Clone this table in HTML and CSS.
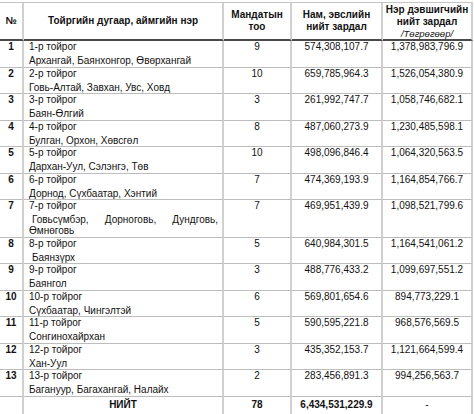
FILE: index.html
```html
<!DOCTYPE html>
<html lang="mn">
<head>
<meta charset="utf-8">
<link rel="stylesheet" href="styles.css">
</head>
<body>
<table class="report">
  <colgroup>
    <col class="c-no">
    <col class="c-name">
    <col class="c-seat">
    <col class="c-party">
    <col class="c-cand">
  </colgroup>
  <thead>
    <tr>
      <th>№</th>
      <th>Тойргийн дугаар, аймгийн нэр</th>
      <th>Мандатын<br>тоо</th>
      <th>Нам, эвслийн<br>нийт зардал</th>
      <th class="cand">Нэр дэвшигчийн<br>нийт зардал<br><span class="unit">/Төгрөгөөр/</span></th>
    </tr>
  </thead>
  <tbody>
    <tr><td class="no">1</td><td class="name"><div class="dist">1-р тойрог</div><div class="aimag">Архангай, Баянхонгор, Өвөрхангай</div></td><td>9</td><td>574,308,107.7</td><td>1,378,983,796.9</td></tr>
    <tr><td class="no">2</td><td class="name"><div class="dist">2-р тойрог</div><div class="aimag">Говь-Алтай, Завхан, Увс, Ховд</div></td><td>10</td><td>659,785,964.3</td><td>1,526,054,380.9</td></tr>
    <tr><td class="no">3</td><td class="name"><div class="dist">3-р тойрог</div><div class="aimag">Баян-Өлгий</div></td><td>3</td><td>261,992,747.7</td><td>1,058,746,682.1</td></tr>
    <tr><td class="no">4</td><td class="name"><div class="dist">4-р тойрог</div><div class="aimag">Булган, Орхон, Хөвсгөл</div></td><td>8</td><td>487,060,273.9</td><td>1,230,485,598.1</td></tr>
    <tr><td class="no">5</td><td class="name"><div class="dist">5-р тойрог</div><div class="aimag">Дархан-Уул, Сэлэнгэ, Төв</div></td><td>10</td><td>498,096,846.4</td><td>1,064,320,563.5</td></tr>
    <tr><td class="no">6</td><td class="name"><div class="dist">6-р тойрог</div><div class="aimag">Дорнод, Сүхбаатар, Хэнтий</div></td><td>7</td><td>474,369,193.9</td><td>1,164,854,766.7</td></tr>
    <tr><td class="no">7</td><td class="name"><div class="dist">7-р тойрог</div><div class="aimag indent justify">Говьсүмбэр, Дорноговь, Дундговь,</div><div class="aimag">Өмнөговь</div></td><td>7</td><td>469,951,439.9</td><td>1,098,521,799.6</td></tr>
    <tr><td class="no">8</td><td class="name"><div class="dist">8-р тойрог</div><div class="aimag indent">Баянзүрх</div></td><td>5</td><td>640,984,301.5</td><td>1,164,541,061.2</td></tr>
    <tr><td class="no">9</td><td class="name"><div class="dist">9-р тойрог</div><div class="aimag">Баянгол</div></td><td>3</td><td>488,776,433.2</td><td>1,099,697,551.2</td></tr>
    <tr><td class="no">10</td><td class="name"><div class="dist">10-р тойрог</div><div class="aimag">Сүхбаатар, Чингэлтэй</div></td><td>6</td><td>569,801,654.6</td><td>894,773,229.1</td></tr>
    <tr><td class="no">11</td><td class="name"><div class="dist">11-р тойрог</div><div class="aimag">Сонгинохайрхан</div></td><td>5</td><td>590,595,221.8</td><td>968,576,569.5</td></tr>
    <tr><td class="no">12</td><td class="name"><div class="dist">12-р тойрог</div><div class="aimag">Хан-Уул</div></td><td>3</td><td>435,352,153.7</td><td>1,121,664,599.4</td></tr>
    <tr><td class="no">13</td><td class="name"><div class="dist">13-р тойрог</div><div class="aimag">Багануур, Багахангай, Налайх</div></td><td>2</td><td>283,456,891.3</td><td>994,256,563.7</td></tr>
    <tr class="total"><td></td><td class="strong">НИЙТ</td><td class="strong">78</td><td class="strong">6,434,531,229.9</td><td>-</td></tr>
  </tbody>
</table>
</body>
</html>
```

FILE: styles.css
```css
html {
  overflow: hidden;
}

body {
  margin: 0;
  background: #ffffff;
  color: #111111;
  font-family: "Liberation Sans", Arial, sans-serif;
}

.report {
  border-collapse: separate;
  border-spacing: 0;
  table-layout: fixed;
  width: 473px;
  margin-top: 2px;
  border-top: 1px solid #c4c4c4;
  font-size: 10px;
  line-height: 11px;
}

.c-no { width: 24px; }
.c-name { width: 200px; }
.c-seat { width: 68px; }
.c-party { width: 91px; }
.c-cand { width: 90px; }

.report th,
.report td {
  padding: 0;
  border-right: 2px solid #d0d0d0;
  border-bottom: 1px solid #bdbdbd;
  text-align: center;
  vertical-align: top;
}

.report thead tr {
  height: 36px;
}

.report th {
  vertical-align: middle;
  font-weight: bold;
  line-height: 12px;
  border-bottom: 2px solid #4a4a4a;
}

.report th.cand {
  vertical-align: top;
  padding-top: 1px;
}

.unit {
  display: block;
  font-size: 9.5px;
  font-weight: normal;
  font-style: italic;
  line-height: 11px;
}

.report td {
  padding-bottom: 0.5px;
}

.report td.no {
  font-weight: bold;
}

.report td.name {
  text-align: left;
  padding-left: 5px;
  padding-right: 4px;
}

.dist {
  margin-bottom: 3px;
}

.indent {
  padding-left: 3px;
}

.justify {
  text-align: justify;
  text-align-last: justify;
}

.report tr.total td {
  padding-top: 2px;
  height: 26px;
}

.report td.strong {
  font-weight: bold;
}
```
